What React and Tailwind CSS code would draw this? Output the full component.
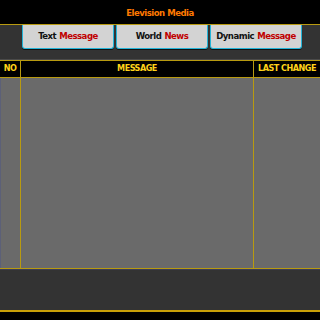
import React from 'react';

const font = { fontFamily: '"DejaVu Sans Condensed", "DejaVu Sans", sans-serif', fontStretch: 'condensed' };

const tabs = [
    { a: 'Text', b: 'Message' },
    { a: 'World', b: 'News' },
    { a: 'Dynamic', b: 'Message' },
];

const App = () => {
    return (
        <div className="flex flex-col h-[320px] w-[320px] bg-black overflow-hidden font-bold whitespace-nowrap" style={font}>
            {/* top title */}
            <div className="h-[25px] pt-[2px] flex items-center justify-center border-b border-[#b89a10] text-[#ff7a00] text-[9.5px] tracking-[-0.5px]">
                Elevision Media
            </div>

            {/* tab buttons */}
            <div className="h-[35px] bg-[#333333] border-b border-[#4a4a4a] pl-[22px] flex gap-[2px]">
                {tabs.map(t => (
                    <div key={t.a + t.b} className="w-[92px] h-[24px] bg-[#d3d3d3] border border-t-0 border-[#23b4d8] rounded-b-[3px] shadow-[0_1px_0_0_#111] flex items-center justify-center text-[9.5px] tracking-[-0.5px]">
                        <span className="text-[#111]">{t.a}</span>
                        <span className="text-[#c00000] ml-[3px]">{t.b}</span>
                    </div>
                ))}
            </div>

            {/* table */}
            <div className="flex flex-col h-[209px] border-y border-[#b89a10]">
                <div className="flex h-[17px] bg-black border-b border-[#b89a10] text-[#ffd21a] text-[9px] tracking-[-0.5px]">
                    <div className="w-[21px] border-r border-[#b89a10] flex items-center justify-center">NO</div>
                    <div className="w-[233px] border-r border-[#b89a10] flex items-center justify-center">MESSAGE</div>
                    <div className="flex-1 flex items-center justify-center">LAST CHANGE</div>
                </div>
                <div className="flex flex-1 bg-[#6a6a6a]">
                    <div className="w-[21px] border-r border-l border-[#b89a10] border-l-[#5c6078]"></div>
                    <div className="w-[233px] border-r border-[#b89a10]"></div>
                    <div className="flex-1"></div>
                </div>
            </div>

            {/* footer bar */}
            <div className="h-[43px] bg-[#333333] border-t border-[#3a3d55] border-b-2 border-b-[#c9a008]"></div>
            <div className="flex-1 bg-black"></div>
        </div>
    );
};

export default App;
